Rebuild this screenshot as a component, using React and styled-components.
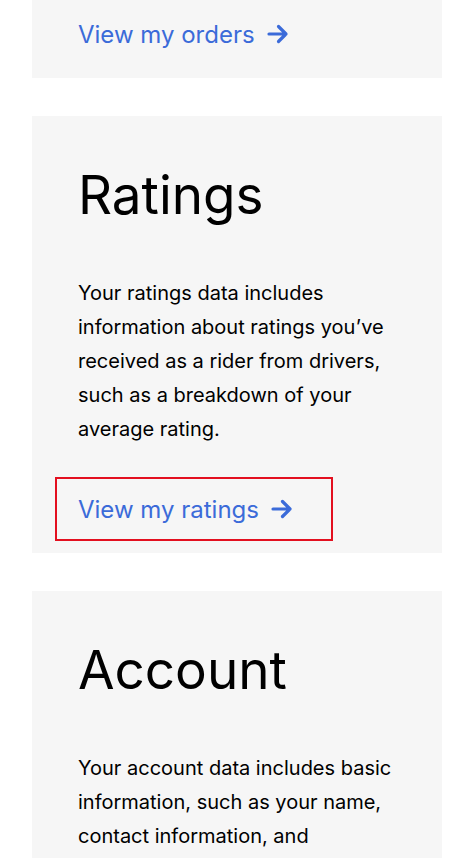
import styled, { createGlobalStyle } from "styled-components";

const GlobalStyle = createGlobalStyle`
  html, body {
    margin: 0;
    padding: 0;
    background: #ffffff;
  }
  body {
    font-family: Inter, "Noto Sans", sans-serif;
    -webkit-font-smoothing: antialiased;
  }
`;

const Page = styled.div`
  display: flex;
  flex-direction: column;
  gap: 38px;
  padding: 0 32px;
  width: 410px;
`;

const Card = styled.section`
  background: #f6f6f6;
  padding: ${(p) => (p.$top ? p.$top : "48px")} 46px 12px;
`;

const Title = styled.h2`
  margin: 0;
  font-size: 53px;
  font-weight: 400;
  line-height: 62px;
  color: #000;
`;

const Text = styled.p`
  margin: 50px 0 0;
  font-size: 20px;
  line-height: 34px;
  color: #000;
`;

const LinkBox = styled.a`
  display: inline-flex;
  align-items: center;
  gap: 12px;
  height: 64px;
  box-sizing: border-box;
  margin: ${(p) => (p.$first ? "0" : "31px")} 0 0 -23px;
  padding: 0 38px 0 21px;
  border: 2px solid ${(p) => (p.$focused ? "#e3101f" : "transparent")};
  color: #3b6bd9;
  font-size: 24px;
  text-decoration: none;
`;

const Arrow = () => (
  <svg width="22" height="20" viewBox="0 0 22 20" fill="none">
    <path
      d="M2 10h17M11.5 2.5L19 10l-7.5 7.5"
      stroke="#3b6bd9"
      strokeWidth="3.2"
      strokeLinecap="round"
      strokeLinejoin="round"
    />
  </svg>
);

const sections = [
  {
    title: "Ratings",
    text: "Your ratings data includes information about ratings you’ve received as a rider from drivers, such as a breakdown of your average rating.",
    link: "View my ratings",
    focused: true,
  },
  {
    title: "Account",
    text: "Your account data includes basic information, such as your name, contact information, and account\u00a0settings.",
    link: "View my account",
  },
];

export default function App() {
  return (
    <>
      <GlobalStyle />
      <Page>
        <Card $top="2px">
          <LinkBox href="#" $first>
            View my orders <Arrow />
          </LinkBox>
        </Card>
        {sections.map((s) => (
          <Card key={s.title}>
            <Title>{s.title}</Title>
            <Text>{s.text}</Text>
            <LinkBox href="#" $focused={s.focused}>
              {s.link} <Arrow />
            </LinkBox>
          </Card>
        ))}
      </Page>
    </>
  );
}
